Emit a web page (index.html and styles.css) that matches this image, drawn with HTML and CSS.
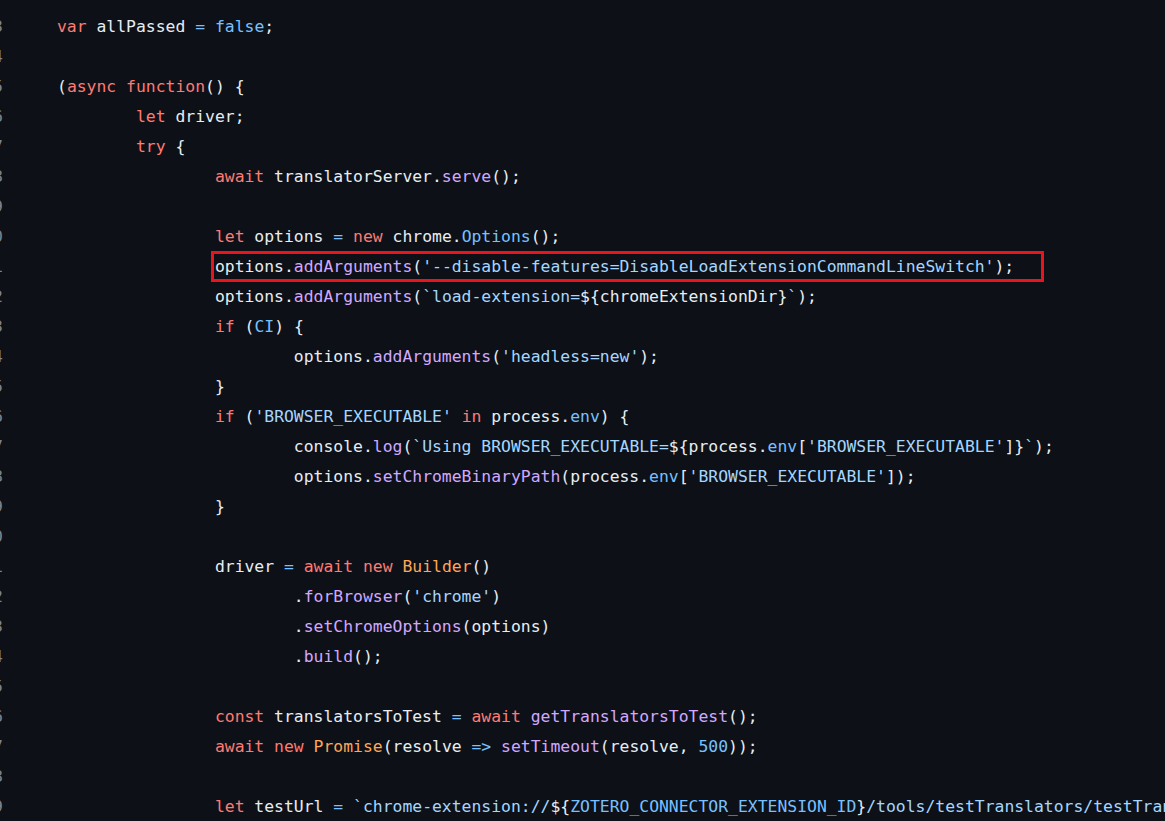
FILE: index.html
```html
<!DOCTYPE html>
<html lang="en">
<head>
<meta charset="utf-8">
<title>code</title>
<link rel="stylesheet" href="styles.css">
</head>
<body>
<div class="view">
<div class="gutter"><div>33</div><div>34</div><div>35</div><div>36</div><div>37</div><div>38</div><div>39</div><div>40</div><div>41</div><div>42</div><div>43</div><div>44</div><div>45</div><div>46</div><div>47</div><div>48</div><div>49</div><div>50</div><div>51</div><div>52</div><div>53</div><div>54</div><div>55</div><div>56</div><div>57</div><div>58</div><div>59</div></div>
<pre class="code"><div class="ln"><span class="k">var</span> allPassed <span class="c">=</span> <span class="c">false</span>;</div><div class="ln"> </div><div class="ln">(<span class="k">async</span> <span class="k">function</span>() {</div><div class="ln">	<span class="k">let</span> driver;</div><div class="ln">	<span class="k">try</span> {</div><div class="ln">		<span class="k">await</span> translatorServer.<span class="f">serve</span>();</div><div class="ln"> </div><div class="ln">		<span class="k">let</span> options <span class="c">=</span> <span class="k">new</span> chrome.<span class="c">Options</span>();</div><div class="ln">		<span class="mark">options.<span class="f">addArguments</span>(<span class="s">'--disable-features=DisableLoadExtensionCommandLineSwitch'</span>);</span></div><div class="ln">		options.<span class="f">addArguments</span>(<span class="s">`load-extension=</span>${chromeExtensionDir}<span class="s">`</span>);</div><div class="ln">		<span class="k">if</span> (<span class="c">CI</span>) {</div><div class="ln">			options.<span class="f">addArguments</span>(<span class="s">'headless=new'</span>);</div><div class="ln">		}</div><div class="ln">		<span class="k">if</span> (<span class="s">'BROWSER_EXECUTABLE'</span> <span class="k">in</span> process.<span class="c">env</span>) {</div><div class="ln">			console.<span class="f">log</span>(<span class="s">`Using BROWSER_EXECUTABLE=</span>${process.<span class="c">env</span>[<span class="s">'BROWSER_EXECUTABLE'</span>]}<span class="s">`</span>);</div><div class="ln">			options.<span class="f">setChromeBinaryPath</span>(process.<span class="c">env</span>[<span class="s">'BROWSER_EXECUTABLE'</span>]);</div><div class="ln">		}</div><div class="ln"> </div><div class="ln">		driver <span class="c">=</span> <span class="k">await</span> <span class="k">new</span> <span class="o">Builder</span>()</div><div class="ln">			.<span class="f">forBrowser</span>(<span class="s">'chrome'</span>)</div><div class="ln">			.<span class="f">setChromeOptions</span>(options)</div><div class="ln">			.<span class="f">build</span>();</div><div class="ln"> </div><div class="ln">		<span class="k">const</span> translatorsToTest <span class="c">=</span> <span class="k">await</span> <span class="f">getTranslatorsToTest</span>();</div><div class="ln">		<span class="k">await</span> <span class="k">new</span> <span class="o">Promise</span>(resolve <span class="c">=&gt;</span> <span class="f">setTimeout</span>(resolve, <span class="c">500</span>));</div><div class="ln"> </div><div class="ln">		<span class="k">let</span> testUrl <span class="c">=</span> <span class="s">`chrome-extension://</span>${<span class="c">ZOTERO_CONNECTOR_EXTENSION_ID</span>}<span class="s">/tools/testTranslators/testTranslators.html#browser=c`</span>;</div></pre>
</div>
</body>
</html>
```
FILE: styles.css
```css
html, body {
  margin: 0;
  padding: 0;
  background: #0d1117;
  overflow: hidden;
}

.view {
  display: flex;
  width: 1165px;
  height: 821px;
  overflow: hidden;
  padding-top: 12px;
  box-sizing: border-box;
  font-family: "DejaVu Sans Mono", "Liberation Mono", monospace;
  font-size: 16.4px;
  line-height: 30px;
  color: #e6edf3;
}

.gutter {
  flex: 0 0 40px;
  margin-left: -37px;
  text-align: right;
  color: #7d8590;
}

.code {
  margin: 0 0 0 54px;
  font: inherit;
  white-space: pre;
  tab-size: 8;
  -moz-tab-size: 8;
}

.ln {
  height: 30px;
}

.k { color: #ff7b72; }
.c { color: #79c0ff; }
.s { color: #a5d6ff; }
.f { color: #d2a8ff; }
.o { color: #ffa657; }

.mark {
  position: relative;
  display: inline-block;
  line-height: 30px;
  height: 30px;
  vertical-align: top;
}

.mark::after {
  content: "";
  position: absolute;
  left: -4px;
  top: -1px;
  width: 833px;
  height: 31px;
  box-sizing: border-box;
  border: 3px solid #e8141e;
  pointer-events: none;
}
```
